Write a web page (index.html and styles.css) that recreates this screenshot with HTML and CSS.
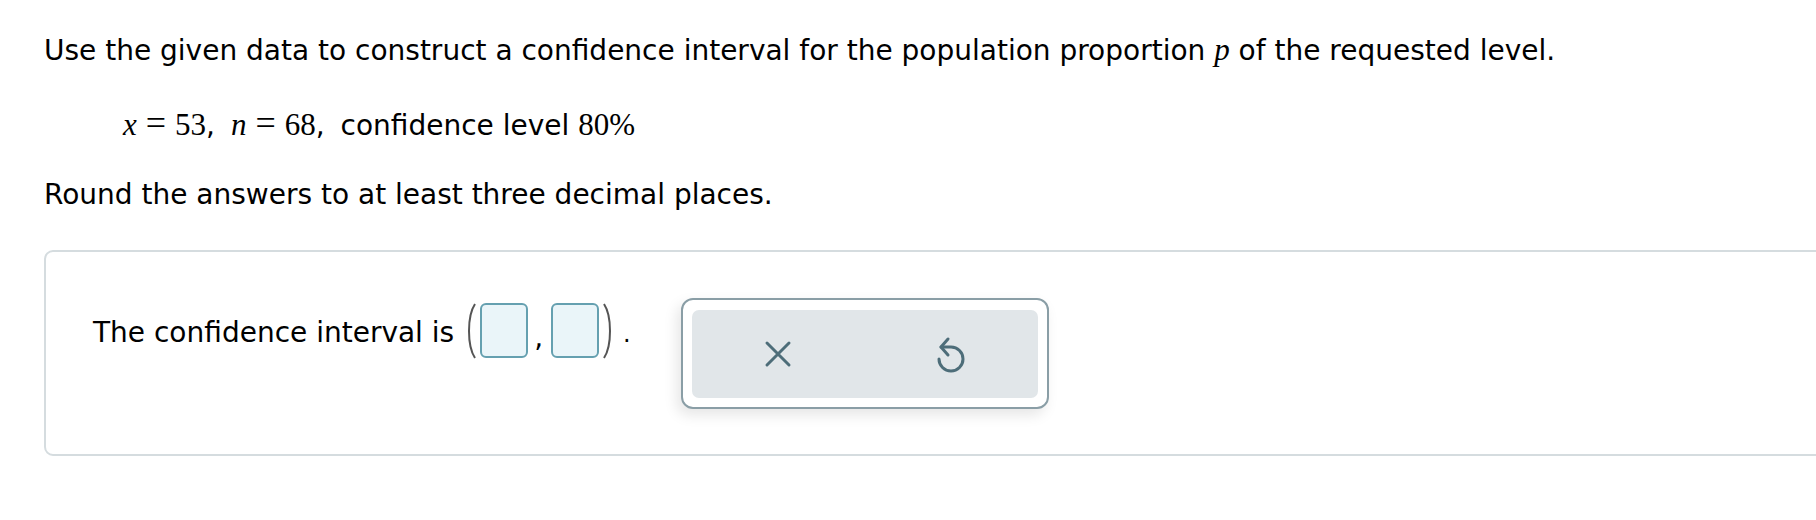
FILE: index.html
```
<!DOCTYPE html>
<html>
<head>
<meta charset="utf-8">
<link rel="stylesheet" href="styles.css">
</head>
<body>
<div class="page">
  <p class="line l1">Use the given data to construct a confidence interval for the population proportion <i class="m">p</i> of the requested level.</p>
  <p class="line l2"><span class="m"><i>x</i><span class="eq">=</span>53</span><span class="sep">,</span> <span class="m"><i>n</i><span class="eq">=</span>68</span><span class="sep">,</span> confidence level <span class="m">80%</span></p>
  <p class="line l3">Round the answers to at least three decimal places.</p>
  <div class="card">
    <div class="answer">
      <span class="label">The confidence interval is</span>
      <svg class="paren" width="14" height="58" viewBox="0 0 14 58"><path d="M11 2 C3 14 3 44 11 56" fill="none" stroke="#555" stroke-width="2"/></svg>
      <span class="box"></span>
      <span class="comma">,</span>
      <span class="box"></span>
      <svg class="paren" width="14" height="58" viewBox="0 0 14 58"><path d="M3 2 C11 14 11 44 3 56" fill="none" stroke="#555" stroke-width="2"/></svg>
      <span class="dot">.</span>
    </div>
    <div class="panel">
      <div class="tools">
        <div class="tool">
          <svg width="28" height="28" viewBox="0 0 28 28"><path d="M3 3 L25 25 M25 3 L3 25" stroke="#4d6d79" stroke-width="3" stroke-linecap="round" fill="none"/></svg>
        </div>
        <div class="tool">
          <svg width="30" height="38" viewBox="0 0 30 38"><path d="M5 12 H15 A12 12 0 1 1 3 24" stroke="#4d6d79" stroke-width="3" stroke-linecap="round" stroke-linejoin="round" fill="none"/><path d="M12 4 L5 12 L12 20" stroke="#4d6d79" stroke-width="3" stroke-linecap="round" stroke-linejoin="round" fill="none"/></svg>
        </div>
      </div>
    </div>
  </div>
</div>
</body>
</html>
```
FILE: styles.css
```
html, body {
  margin: 0;
  padding: 0;
  background: #fff;
  overflow: hidden;
}
.page {
  padding: 31px 0 0 44px;
  font-family: "DejaVu Sans", Verdana, sans-serif;
  font-size: 28px;
  color: #000;
}
.line {
  margin: 0;
  line-height: 40px;
  white-space: nowrap;
}
.m {
  font-family: "Liberation Serif", "Times New Roman", serif;
}
i.m, .m i {
  font-style: italic;
}
.l1 i.m {
  font-size: 31px;
  line-height: 0;
}
.l2 {
  margin-top: 35px;
  padding-left: 79px;
  height: 40px;
}
.l2 .m {
  font-size: 31px;
  line-height: 0;
}
.eq {
  font-size: 36px;
  line-height: 0;
  margin: 0 9px;
}
.sep {
  margin-right: 7px;
}
.l3 {
  margin-top: 29px;
}
.card {
  margin-top: 35px;
  box-sizing: border-box;
  width: calc(100% + 20px);
  height: 206px;
  border: 2px solid #d5dcdf;
  border-radius: 9px;
  padding: 46px 0 0 47px;
  display: flex;
  align-items: flex-start;
}
.answer {
  margin-top: 5px;
  height: 55px;
  display: flex;
  align-items: center;
}
.label {
  margin-right: 10px;
  margin-top: 4px;
}
.paren {
  display: block;
}
.box {
  display: block;
  box-sizing: border-box;
  width: 48px;
  height: 55px;
  border: 2px solid #65a0b0;
  border-radius: 6px;
  background: #eaf5f9;
  margin: 0 2px;
}
.comma {
  align-self: flex-end;
  margin: 0 6px 0 4px;
  line-height: 40px;
}
.dot {
  margin-left: 8px;
  font-size: 24px;
  margin-top: 6px;
}
.panel {
  margin-left: 50px;
  box-sizing: border-box;
  width: 368px;
  height: 111px;
  border: 2px solid #8a9ea6;
  border-radius: 12px;
  padding: 10px 9px 9px 9px;
  background: #fff;
  box-shadow: -4px 6px 14px rgba(0, 0, 0, 0.10);
}
.tools {
  height: 100%;
  border-radius: 7px;
  background: #e1e6e9;
  display: flex;
}
.tool {
  flex: 1;
  display: flex;
  align-items: center;
  justify-content: center;
}
```
